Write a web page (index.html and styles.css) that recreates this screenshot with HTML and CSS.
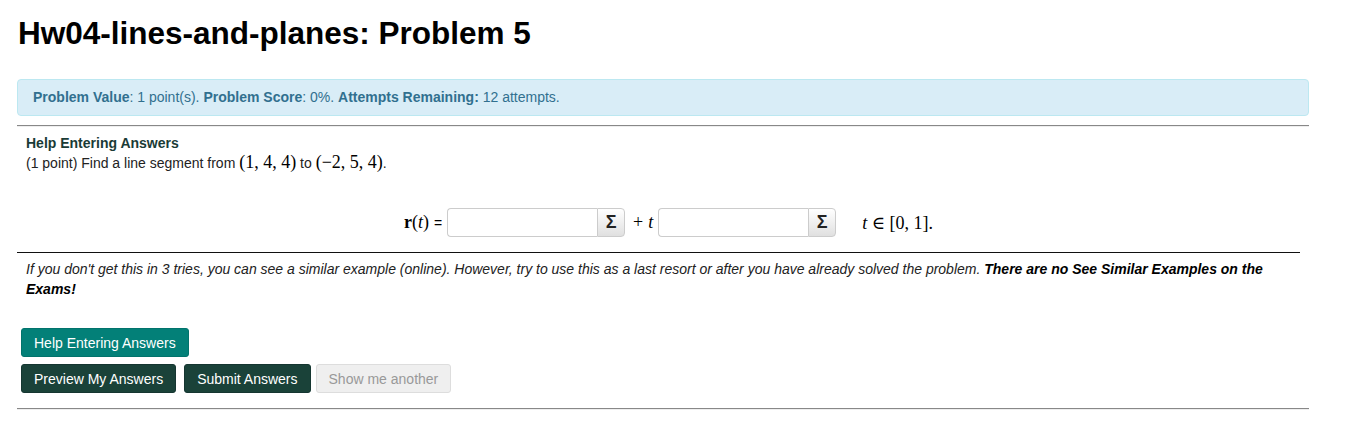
FILE: index.html
```html
<!DOCTYPE html>
<html lang="en">
<head>
  <meta charset="UTF-8" />
  <title>Hw04-lines-and-planes: Problem 5</title>
  <link rel="stylesheet" href="styles.css">
</head>
<body>
  <div class="page">
    <h1 class="page-title">Hw04-lines-and-planes: Problem 5</h1>

    <div class="alert-info">
      <b>Problem Value</b>: 1 point(s). <b>Problem Score</b>: 0%. <b>Attempts Remaining:</b> 12 attempts.
    </div>

    <hr class="rule">

    <div class="problem">
      <div class="help-link">Help Entering Answers</div>
      <div class="statement">
        (1 point) Find a line segment from <span class="math">(1, 4, 4)</span> to <span class="math">(&minus;2, 5, 4)</span>.
      </div>

      <div class="answer-row">
        <span class="label"><span class="math"><b>r</b>(<i>t</i>)</span><span class="eq">=</span></span>
        <span class="input-group">
          <input type="text" class="answer">
          <span class="sigma">&Sigma;</span>
        </span>
        <span class="math plus">+<i>t</i></span>
        <span class="input-group">
          <input type="text" class="answer">
          <span class="sigma">&Sigma;</span>
        </span>
        <span class="math range"><i>t</i> &isin; [0, 1].</span>
      </div>

      <hr class="dark-rule">

      <p class="note">
        If you don't get this in 3 tries, you can see a similar example (online). However, try to use this as a last resort or after you have already solved the problem. <b>There are no See Similar Examples on the Exams!</b>
      </p>
    </div>

    <div class="buttons">
      <div class="btn-row">
        <button class="btn btn-help">Help Entering Answers</button>
      </div>
      <div class="btn-row">
        <button class="btn btn-dark">Preview My Answers</button>
        <button class="btn btn-dark">Submit Answers</button>
        <button class="btn btn-disabled" disabled>Show me another</button>
      </div>
    </div>

    <hr class="rule bottom">
  </div>
</body>
</html>
```

FILE: styles.css
```css
body {
  margin: 0;
  padding: 0;
  font-family: "Liberation Sans", Arial, sans-serif;
  font-size: 14px;
  color: #222;
  background: #fff;
}

.page {
  width: 1292px;
  padding-left: 17px;
}

.page-title {
  font-size: 31.5px;
  font-weight: bold;
  color: #000;
  margin: 0;
  padding: 15px 0 0 1px;
  line-height: 36px;
}

.alert-info {
  margin-top: 28px;
  background-color: #d9edf7;
  border: 1px solid #bce8f1;
  border-radius: 4px;
  color: #31708f;
  padding: 10px 15px;
  font-size: 14px;
  line-height: 15px;
}

.rule {
  margin: 9px 0 0 0;
  border: 0;
  border-top: 1px solid #888;
  border-bottom: 1px solid #eee;
  height: 0;
}

.rule.bottom {
  margin-top: 15px;
}

.problem {
  padding: 7px 0 0 9px;
}

.help-link {
  font-weight: bold;
  color: #1a3b36;
  line-height: 18px;
}

.statement {
  line-height: 20px;
}

.math {
  font-family: "Liberation Serif", "DejaVu Serif", serif;
  font-size: 18px;
  color: #000;
}

.answer-row {
  display: flex;
  justify-content: center;
  align-items: center;
  height: 29px;
  margin-top: 35px;
  padding-left: 2px;
  color: #000;
}

.label {
  margin-right: 5px;
}

.eq {
  margin-left: 5px;
}

.input-group {
  display: flex;
  height: 29px;
}

.answer {
  width: 150px;
  height: 29px;
  box-sizing: border-box;
  border: 1px solid #ccc;
  border-right: 0;
  border-radius: 4px 0 0 4px;
  padding: 4px 6px;
  margin: 0;
  font-size: 14px;
}

.sigma {
  width: 28px;
  height: 29px;
  box-sizing: border-box;
  border: 1px solid #ccc;
  border-radius: 0 4px 4px 0;
  background: linear-gradient(#ffffff, #e0e0e0);
  display: flex;
  align-items: center;
  justify-content: center;
  font-family: "Liberation Sans", Arial, sans-serif;
  font-weight: bold;
  font-size: 18px;
  color: #222;
}

.plus {
  margin: 0 5px 0 8px;
}

.plus i {
  margin-left: 5px;
}

.range {
  margin-left: 26px;
}

.dark-rule {
  margin: 15px 9px 0 -9px;
  border: 0;
  border-top: 1px solid #111;
  height: 0;
}

.note {
  font-style: italic;
  margin: 6px 30px 0 0;
  line-height: 20px;
  color: #222;
}

.note b {
  color: #000;
}

.buttons {
  margin-top: 29px;
  padding-left: 4px;
  display: flex;
  flex-direction: column;
  gap: 7px;
}

.btn-row {
  display: flex;
  gap: 8px;
}

.btn {
  font-family: "Liberation Sans", Arial, sans-serif;
  font-size: 14px;
  height: 29px;
  padding: 0 12px;
  border-radius: 3px;
  border: 1px solid transparent;
  color: #fff;
  cursor: pointer;
}

.btn-help {
  background-color: #038078;
  border-color: #02736c;
}

.btn-dark {
  background-color: #1a4239;
  border-color: #153631;
}

.btn-disabled {
  background-color: #efefef;
  border-color: #ddd;
  color: #999;
  cursor: default;
  margin-left: -3px;
}
```
